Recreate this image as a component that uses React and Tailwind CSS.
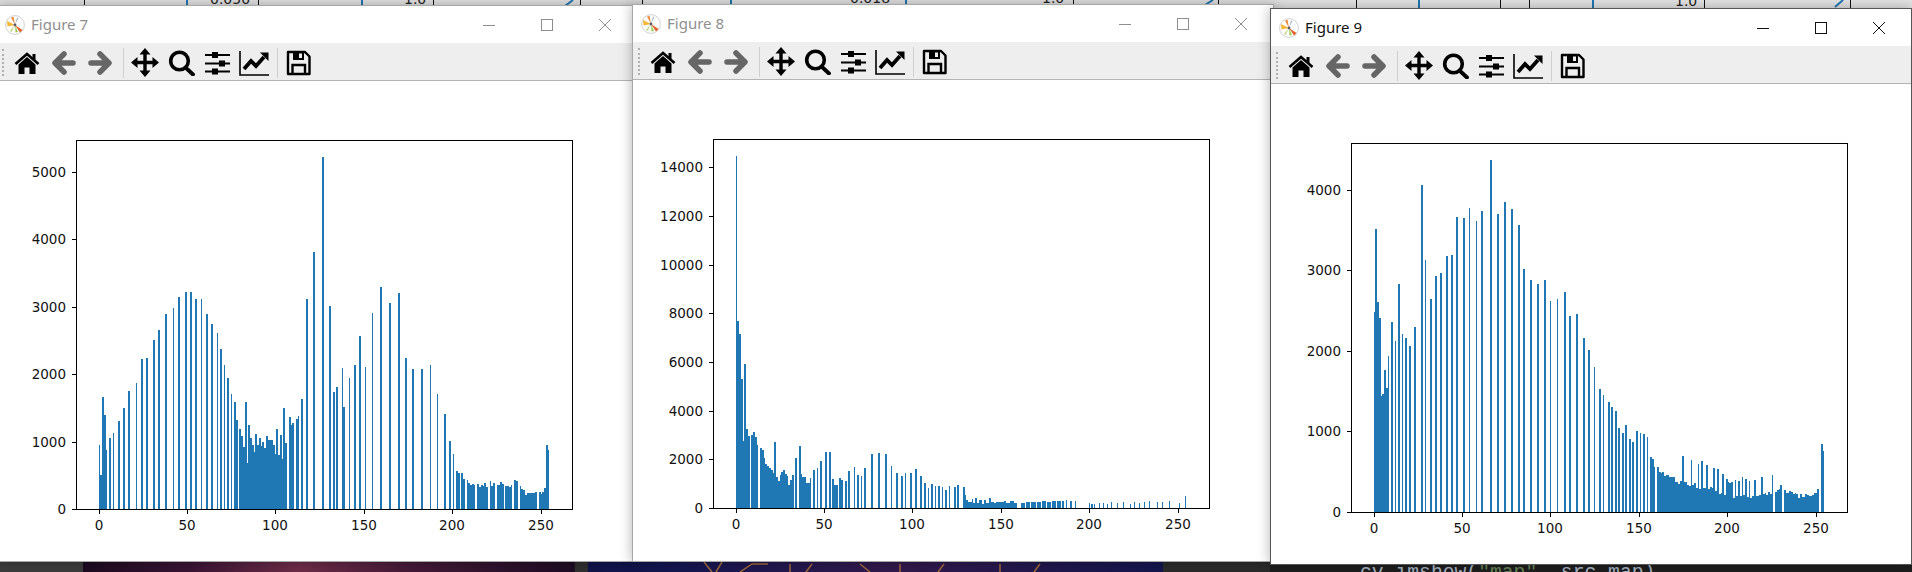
import React from 'react';

// Bars are [x0, x1, top] read off 3x crops, so x and y are page px * 3 from a crop origin.
const fig7a = [[87,90,915],[90,96,1005],[96,102,771],[102,108,825],[108,111,930],[117,123,894],[129,132,879],[144,150,843],[159,165,804],[174,180,753],[198,201,729],[213,219,657],[228,234,654],[249,255,600],[264,270,570],[285,291,522],[309,312,504],[324,330,471],[345,351,456],[360,366,456],[375,381,477],[393,396,477],[408,414,522],[423,429,552],[441,444,579],[450,456,627],[462,465,675],[471,477,714],[483,486,762],[492,498,786],[498,504,840],[507,513,867],[513,519,888],[519,525,921],[525,531,786],[531,534,969],[534,540,855],[540,546,894],[546,552,915],[552,555,936],[555,561,882],[561,567,915],[567,573,894],[573,576,918],[576,582,906],[582,588,924],[588,594,888],[594,609,900],[609,615,915],[615,618,942],[618,624,867],[624,630,945],[630,636,885],[636,639,957],[639,645,804],[645,651,909],[657,663,831],[663,666,855],[666,672,849],[678,684,837],[684,687,828],[693,699,777],[708,714,477],[729,735,336],[756,762,51],[777,783,498],[789,795,756],[798,804,741],[816,819,684],[819,825,801],[837,840,714],[852,858,675],[867,873,588],[885,888,681]];
const fig7b = [[216,219,519],[240,246,441],[267,273,489],[294,300,459],[315,321,654],[336,342,687],[363,369,687],[390,393,675],[411,414,762],[432,438,822],[447,453,903],[459,462,942],[468,474,993],[474,480,999],[483,489,999],[489,495,1017],[501,504,1020],[504,510,1029],[510,516,1035],[516,522,1032],[522,525,1035],[531,537,1032],[537,543,1041],[543,549,1035],[549,552,1038],[552,558,1029],[558,564,1041],[570,573,1023],[573,579,1038],[579,585,1029],[591,600,1035],[600,606,1026],[606,612,1032],[615,627,1038],[627,633,1041],[633,636,1035],[642,648,1020],[648,654,1023],[660,663,1038],[663,669,1047],[669,675,1050],[675,681,1065],[681,705,1059],[705,711,1056],[717,723,1056],[723,726,1062],[726,732,1056],[732,738,1044],[738,744,915],[744,747,930]];
const fig8a = [[108,111,48],[111,117,543],[117,123,582],[123,129,717],[129,132,903],[132,138,672],[138,144,867],[144,150,888],[153,159,885],[159,165,876],[165,171,891],[171,174,915],[180,186,924],[186,192,930],[192,195,954],[195,201,972],[201,207,978],[207,213,984],[213,219,990],[219,222,999],[222,228,906],[228,234,1011],[234,240,1023],[240,243,1005],[243,249,996],[249,255,990],[255,261,1002],[261,264,1008],[264,270,1035],[270,276,1020],[276,282,1005],[285,291,954],[297,303,918],[303,306,1002],[306,318,1011],[318,330,1029],[330,333,1014],[339,345,990],[351,354,984],[360,366,963],[375,381,936],[387,393,936],[396,402,1017],[402,414,1035],[417,423,1014],[423,429,1020],[435,441,1023],[444,450,993],[462,465,981],[471,477,1005],[483,486,1008],[492,498,984],[513,519,942],[534,540,939],[555,561,942],[573,576,978],[588,594,999],[603,609,1008],[615,618,999],[630,636,999],[645,651,987],[660,666,1008],[672,678,1029],[684,687,1044],[693,699,1032],[705,708,1038],[714,720,1038],[726,729,1041],[735,741,1050],[747,750,1038],[762,768,1041],[771,777,1035],[789,795,1041],[795,798,1065],[798,804,1080],[804,816,1086],[816,819,1077],[819,825,1089],[825,831,1074],[831,837,1089],[837,846,1080],[846,852,1092],[852,858,1080],[858,867,1089],[867,873,1074],[873,882,1086],[882,888,1089],[888,912,1086],[912,918,1083],[918,930,1089],[930,942,1083],[942,951,1089],[963,975,1089],[978,990,1086],[993,1008,1086],[1011,1023,1086],[1026,1038,1083],[1041,1053,1086],[1056,1068,1083],[1071,1083,1083],[1086,1092,1083],[1098,1101,1080],[1110,1116,1083],[1125,1128,1083],[1167,1170,1089],[1173,1179,1092],[1182,1185,1092],[1197,1200,1089],[1209,1212,1089],[1221,1224,1092],[1233,1236,1086],[1251,1254,1089],[1269,1272,1086],[1290,1293,1092],[1302,1305,1086],[1317,1320,1089],[1332,1335,1086],[1347,1350,1083],[1371,1374,1086],[1386,1389,1086],[1407,1410,1083],[1437,1440,1089],[1455,1458,1068]];
const fig9a = [[102,105,516],[105,111,267],[111,117,486],[117,123,534],[123,126,768],[126,132,762],[132,138,690],[138,144,744],[144,147,648],[153,159,546],[165,168,603],[174,180,432],[186,189,582],[195,201,594],[207,213,618],[222,228,561],[243,249,135],[255,258,360],[270,276,477],[285,291,408],[300,306,399],[318,324,348],[333,339,345],[348,354,231],[369,375,234],[387,390,204],[408,411,243],[423,429,213],[450,456,60],[471,477,222],[492,498,186],[513,519,207],[534,540,255],[549,555,387],[570,576,420],[591,597,432],[612,618,420],[630,633,483],[651,654,477],[672,678,456],[687,693,528],[708,714,522],[729,735,594],[744,750,630],[762,765,681],[777,783,747],[789,792,765],[804,810,786],[813,819,801],[825,831,813],[834,840,864]];
const fig9b = [[66,72,879],[75,81,855],[87,93,897],[96,102,906],[108,114,873],[120,123,879],[129,135,882],[141,144,891],[150,156,951],[156,162,957],[162,165,981],[171,177,981],[177,183,996],[183,186,999],[186,192,996],[192,198,1008],[198,207,1005],[207,225,1011],[225,234,1026],[234,240,1032],[240,246,1023],[246,252,948],[252,261,1026],[261,267,1035],[267,273,1038],[273,276,960],[276,282,1035],[282,288,1029],[288,294,1044],[294,297,972],[297,303,1047],[303,309,963],[309,318,1044],[318,324,975],[324,330,1047],[330,336,1041],[336,339,1044],[339,345,984],[345,351,1053],[351,357,987],[357,363,1062],[363,366,1059],[366,372,1002],[372,378,1065],[378,384,1017],[384,387,1026],[387,393,1029],[393,399,1026],[399,405,1074],[405,408,1020],[408,414,1068],[414,420,1023],[420,426,1068],[426,429,1011],[429,435,1065],[435,441,1017],[441,447,1071],[447,450,1023],[450,456,1074],[456,462,1068],[462,468,1020],[468,477,1068],[477,483,1065],[483,489,1011],[489,495,1062],[495,498,1059],[498,504,1065],[504,510,1056],[510,516,1062],[516,519,1005],[525,531,1056],[531,537,1050],[537,540,1047],[540,546,1035],[552,558,1050],[558,567,1059],[567,573,1053],[573,579,1056],[579,585,1062],[585,588,1059],[588,594,1062],[594,600,1074],[600,606,1062],[606,615,1071],[615,621,1062],[621,627,1065],[627,636,1068],[636,642,1065],[642,651,1059],[651,657,1047],[663,669,912],[669,672,933]];

const place = (rows, ox) => rows.map(([a, b, t]) => ({ x: ox + a / 3, w: (b - a) / 3, y: 140 + t / 3 }));

const figures = [
    {
        title: 'Figure 7', frame: 'left-[-4px] top-[5px] h-[557px] border-[#a8a8a8]', active: false,
        view: [-3, 81], box: { left: 76, right: 572, top: 140, bottom: 509 },
        xTicks: [99, 187, 275, 364, 452, 541],
        yTicks: [[509, '0'], [442, '1000'], [374, '2000'], [307, '3000'], [239, '4000'], [172, '5000']],
        bars: [...place(fig7a, 70), ...place(fig7b, 300)],
    },
    {
        title: 'Figure 8', frame: 'left-[632px] top-[4px] h-[558px] border-[#a8a8a8]', active: false,
        view: [633, 80], box: { left: 713, right: 1209, top: 139, bottom: 508 },
        xTicks: [736, 824, 912, 1001, 1089, 1178],
        yTicks: [[508, '0'], [459, '2000'], [411, '4000'], [362, '6000'], [313, '8000'], [265, '10000'], [216, '12000'], [167, '14000']],
        bars: place(fig8a, 700),
    },
    {
        title: 'Figure 9', frame: 'left-[1270px] top-[8px] h-[557px] border-[#555555]', active: true,
        view: [1271, 84], box: { left: 1351, right: 1847, top: 143, bottom: 512 },
        xTicks: [1374, 1462, 1550, 1639, 1727, 1816],
        yTicks: [[512, '0'], [431, '1000'], [351, '2000'], [270, '3000'], [190, '4000']],
        bars: [...place(fig9a, 1340), ...place(fig9b, 1600)],
    },
];

const Logo = () => (
    <svg width="20" height="20" viewBox="0 0 20 20" className="shrink-0">
        <circle cx="10" cy="10" r="9.4" fill="#fff" stroke="#c4c4c4" strokeWidth="0.8" />
        <path d="M10 10 L2 6 L2.5 11.5 Z" fill="#f4b73a" />
        <path d="M10 10 L17.5 15 L15 17.5 Z" fill="#e4602c" />
        <path d="M10 10 L6 2.5 L8.5 1.8 Z" fill="#ee8a3c" />
        <path d="M10 10 L10.5 17.5 L13 17 Z" fill="#9ccb5a" />
        <path d="M10 10 L5 16 L6.5 17 Z" fill="#b9d67c" />
        <path d="M10 10 L13.5 3 L12 2.5 Z" fill="#a9b8c8" />
        <circle cx="10" cy="10" r="1.4" fill="#5a5a6a" />
    </svg>
);

const HomeIcon = () => (
    <svg width="26" height="24" viewBox="0 0 26 24">
        <path d="M1.5 13 L13 3 L24.5 13" fill="none" stroke="#000" strokeWidth="2.6" />
        <path d="M18.5 3 H21.5 V9 H18.5 Z" fill="#000" />
        <path d="M4.5 13.5 L13 6 L21.5 13.5 V23 H15.5 V16.5 H10.5 V23 H4.5 Z" fill="#000" />
    </svg>
);

const ArrowLeftIcon = () => (
    <svg width="24" height="24" viewBox="0 0 24 24">
        <path d="M12 3 L3 12 L12 21 M4 12 H21" fill="none" stroke="#666" strokeWidth="5.5" strokeLinejoin="round" strokeLinecap="round" />
    </svg>
);

const ArrowRightIcon = () => (
    <svg width="24" height="24" viewBox="0 0 24 24">
        <path d="M12 3 L21 12 L12 21 M20 12 H3" fill="none" stroke="#666" strokeWidth="5.5" strokeLinejoin="round" strokeLinecap="round" />
    </svg>
);

const MoveIcon = () => (
    <svg width="28" height="29" viewBox="0 0 28 29">
        <path d="M14 5 V24 M5 14.5 H23" stroke="#000" strokeWidth="3.4" fill="none" />
        <path d="M14 0 L19.5 6.5 H8.5 Z M14 29 L8.5 22.5 H19.5 Z M0 14.5 L6.5 9 V20 Z M28 14.5 L21.5 20 V9 Z" fill="#000" />
    </svg>
);

const SearchIcon = () => (
    <svg width="27" height="26" viewBox="0 0 27 26">
        <circle cx="11.5" cy="11" r="8.8" fill="none" stroke="#000" strokeWidth="3.6" />
        <path d="M17.5 17.5 L25 24.5" stroke="#000" strokeWidth="3.8" strokeLinecap="round" />
    </svg>
);

const SlidersIcon = () => (
    <svg width="25" height="24" viewBox="0 0 25 24">
        <path d="M0 4 H25 M0 12.5 H25 M0 20.5 H25" stroke="#000" strokeWidth="2" />
        <path d="M7 1 H13 V7 H7 Z M14 9.5 H20 V15.5 H14 Z M7 17.5 H13 V23.5 H7 Z" fill="#000" />
    </svg>
);

const ChartIcon = () => (
    <svg width="30" height="26" viewBox="0 0 30 26">
        <path d="M1 1 V25 H30" fill="none" stroke="#000" strokeWidth="1.6" />
        <path d="M5 19 L12 11 L17 16 L25 7" fill="none" stroke="#000" strokeWidth="3.8" />
        <path d="M21 2.5 H29.5 V11 Z" fill="#000" />
    </svg>
);

const SaveIcon = () => (
    <svg width="25" height="26" viewBox="0 0 25 26">
        <path d="M2 2 H19 L23.5 6.5 V24 H2 Z" fill="none" stroke="#000" strokeWidth="2.4" strokeLinejoin="round" />
        <path d="M7 2 H18 V10 H7 Z" fill="#000" />
        <path d="M13 3.5 H16 V8 H13 Z" fill="#eee" />
        <path d="M6.5 24 V15 H19 V24" fill="none" stroke="#000" strokeWidth="2.4" />
    </svg>
);

const ToolButton = ({ children }) => (
    <div className="w-[36.5px] h-full flex items-center justify-center">{children}</div>
);

const Plot = ({ view, box, xTicks, yTicks, bars }) => {
    const labels = ['0', '50', '100', '150', '200', '250'];
    return (
        <svg className="block w-[640px] h-[480px]" viewBox={`${view[0]} ${view[1]} 640 480`}>
            <g shapeRendering="crispEdges" fill="#1f77b4">
                {bars.map((b, i) => (
                    <rect key={i} x={b.x} y={b.y} width={b.w} height={box.bottom - b.y} />
                ))}
            </g>
            <g shapeRendering="crispEdges" fill="#000">
                <rect x={box.left} y={box.top} width={box.right - box.left + 1} height="1" />
                <rect x={box.left} y={box.bottom} width={box.right - box.left + 1} height="1" />
                <rect x={box.left} y={box.top} width="1" height={box.bottom - box.top + 1} />
                <rect x={box.right} y={box.top} width="1" height={box.bottom - box.top + 1} />
                {xTicks.map((x) => (
                    <rect key={x} x={x} y={box.bottom + 1} width="1" height="4" />
                ))}
                {yTicks.map(([y]) => (
                    <rect key={y} x={box.left - 4} y={y} width="4" height="1" />
                ))}
            </g>
            <g className="font-['DejaVu_Sans',sans-serif] text-[13.5px]" fill="#111">
                {xTicks.map((x, i) => (
                    <text key={x} x={x} y={box.bottom + 21} textAnchor="middle">{labels[i]}</text>
                ))}
                {yTicks.map(([y, label]) => (
                    <text key={y} x={box.left - 10} y={y + 5} textAnchor="end">{label}</text>
                ))}
            </g>
        </svg>
    );
};

const FigureWindow = ({ title, frame, active, view, box, xTicks, yTicks, bars }) => {
    const chrome = active ? '#111' : '#8e8e8e';
    return (
        <div className={`absolute w-[642px] bg-white border overflow-hidden shadow-[0_0_12px_rgba(0,0,0,0.3)] ${frame}`}>
            <div className="h-[37px] flex items-center pl-[8px] pr-[3px]">
                <Logo />
                <span className={`ml-[6px] text-[15px] font-['Noto_Sans',sans-serif] ${active ? 'text-[#111111]' : 'text-[#8f8f8f]'}`}>{title}</span>
                <div className="ml-auto flex items-center">
                    <div className="w-[58px] flex justify-center">
                        <svg width="12" height="12" viewBox="0 0 12 12"><path d="M0 6.5 H12" stroke={chrome} strokeWidth="1" /></svg>
                    </div>
                    <div className="w-[58px] flex justify-center">
                        <svg width="12" height="12" viewBox="0 0 12 12"><rect x="0.5" y="0.5" width="11" height="11" fill="none" stroke={chrome} strokeWidth="1" /></svg>
                    </div>
                    <div className="w-[58px] flex justify-center">
                        <svg width="12" height="12" viewBox="0 0 12 12"><path d="M0 0 L12 12 M12 0 L0 12" stroke={chrome} strokeWidth="1" /></svg>
                    </div>
                </div>
            </div>
            <div className="h-[38px] flex items-center pt-[2px] pl-[5px] bg-[#eeeeee] border-b border-[#b4b4b4]">
                <div className="w-[2px] h-[27px] border-l-2 border-dotted border-[#b0b0b0] mr-[5px]"></div>
                <ToolButton><HomeIcon /></ToolButton>
                <ToolButton><ArrowLeftIcon /></ToolButton>
                <ToolButton><ArrowRightIcon /></ToolButton>
                <div className="w-px h-[30px] bg-[#cfcfcf] ml-1 mr-[3px]"></div>
                <ToolButton><MoveIcon /></ToolButton>
                <ToolButton><SearchIcon /></ToolButton>
                <ToolButton><SlidersIcon /></ToolButton>
                <ToolButton><ChartIcon /></ToolButton>
                <div className="w-px h-[30px] bg-[#cfcfcf] ml-1 mr-[3px]"></div>
                <ToolButton><SaveIcon /></ToolButton>
            </div>
            <Plot view={view} box={box} xTicks={xTicks} yTicks={yTicks} bars={bars} />
        </div>
    );
};

// The sliver of another plot window that shows above the figures
const BackStrip = () => (
    <svg className="block w-[1912px] h-[10px]" viewBox="0 0 1912 10">
        <rect width="1912" height="10" fill="#e4e4e4" />
        {[84, 258, 433, 580, 642, 1073, 1218, 1356, 1500, 1529, 1704, 1850].map((x) => (
            <rect key={x} x={x} y="0" width="1" height="10" fill="#111" />
        ))}
        {[186, 361, 730, 905, 1418, 1592].map((x) => (
            <rect key={x} x={x} y="0" width="2" height="10" fill="#1f77b4" />
        ))}
        <path d="M565 6 L573 0 M1205 5 L1213 0 M1835 7 L1843 0" stroke="#1f77b4" strokeWidth="2" />
        <g className="font-['DejaVu_Sans',sans-serif] text-[14px]" fill="#222">
            <text x="210" y="4">0.050</text>
            <text x="404" y="4">1.0</text>
            <text x="850" y="3">0.018</text>
            <text x="1042" y="3">1.0</text>
            <text x="1675" y="6">1.0</text>
        </g>
    </svg>
);

const Wallpaper = () => (
    <svg className="block w-[1080px] h-[12px]" viewBox="83 560 1080 12" preserveAspectRatio="none">
        <defs>
            <linearGradient id="nebula" x1="0" x2="1" y1="0" y2="0">
                <stop offset="0" stopColor="#1c0a20" />
                <stop offset="0.1" stopColor="#3a1534" />
                <stop offset="0.2" stopColor="#6e2c48" />
                <stop offset="0.3" stopColor="#451a38" />
                <stop offset="0.455" stopColor="#1e0c24" />
                <stop offset="0.456" stopColor="#303030" />
                <stop offset="0.467" stopColor="#303030" />
                <stop offset="0.468" stopColor="#10144a" />
                <stop offset="0.55" stopColor="#141650" />
                <stop offset="0.75" stopColor="#32194c" />
                <stop offset="1" stopColor="#14164e" />
            </linearGradient>
        </defs>
        <rect x="83" y="560" width="1080" height="12" fill="url(#nebula)" />
        <path d="M704 562 L712 572 M722 562 L716 572 M740 572 L752 564 H768 M790 564 V572 M812 564 L806 572 M860 564 L870 572 M900 564 V572 M944 564 L938 572 M1000 564 V572 M1040 564 L1034 572" stroke="#a0683a" strokeWidth="1.5" fill="none" />
    </svg>
);

const App = () => (
    <div className="relative w-[1912px] h-[572px] overflow-hidden bg-[#1e1e1e]">
        <BackStrip />
        <div className="mt-[550px] h-[12px] flex">
            <div className="w-[83px] bg-[#3c3c3c]"></div>
            <Wallpaper />
            <div className="w-[107px] bg-[#2b2b2b]"></div>
            <div className="flex-1 bg-[#1e1e1e] pl-[90px] pt-[4px] font-['Liberation_Mono',monospace] text-[19.7px] leading-none whitespace-pre text-[#a9b7c6]">
                cv.imshow(<span className="text-[#6a8759]">"map"</span>, src_map)
            </div>
        </div>
        {figures.map((fig) => (
            <FigureWindow key={fig.title} {...fig} />
        ))}
    </div>
);

export default App;
